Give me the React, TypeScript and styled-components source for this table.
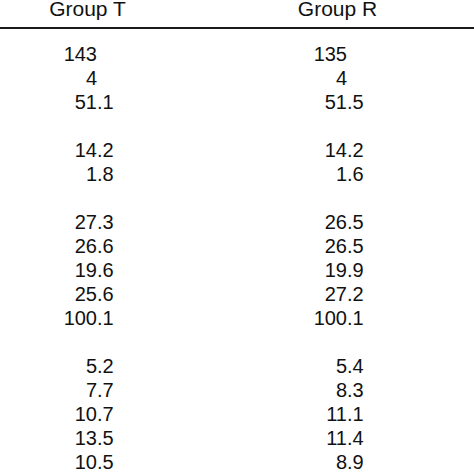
import React from "react";
import styled, { createGlobalStyle } from "styled-components";

const Global = createGlobalStyle`
  html, body { margin: 0; padding: 0; background: #ffffff; }
  body { font-family: "Liberation Sans", Arial, Helvetica, sans-serif; color: #111111; }
`;

const Page = styled.div`
  width: 474px;
  height: 474px;
  overflow: hidden;
  background: #ffffff;
`;

const HeaderRow = styled.div`
  display: grid;
  grid-template-columns: 100px 100px;
  column-gap: 150px;
  padding-left: 37.5px;
  padding-bottom: 9px;
  border-bottom: 2px solid #1a1a1a;
`;

const HeaderCell = styled.div`
  font-size: 21px;
  line-height: 18px;
  height: 18px;
  text-align: center;
  white-space: nowrap;
`;

const Body = styled.div`
  margin-top: 13px;
`;

const Row = styled.div`
  display: grid;
  grid-template-columns: 100px 100px;
  column-gap: 150px;
  padding-left: 37px;
  height: 24px;
  font-size: 20px;
  line-height: 24px;
`;

const NumCell = styled.div`
  display: grid;
  grid-template-columns: 60px 40px;
`;

const IntPart = styled.span`
  text-align: right;
`;

const FracPart = styled.span`
  text-align: left;
`;

type RowData = [string, string] | null;

const rows: RowData[] = [
  ["143", "135"],
  ["4", "4"],
  ["51.1", "51.5"],
  null,
  ["14.2", "14.2"],
  ["1.8", "1.6"],
  null,
  ["27.3", "26.5"],
  ["26.6", "26.5"],
  ["19.6", "19.9"],
  ["25.6", "27.2"],
  ["100.1", "100.1"],
  null,
  ["5.2", "5.4"],
  ["7.7", "8.3"],
  ["10.7", "11.1"],
  ["13.5", "11.4"],
  ["10.5", "8.9"],
];

const Num: React.FC<{ value: string }> = ({ value }) => {
  const i = value.indexOf(".");
  const intPart = i >= 0 ? value.slice(0, i) : value;
  const frac = i >= 0 ? value.slice(i) : "";
  return (
    <NumCell>
      <IntPart>{intPart}</IntPart>
      <FracPart>{frac}</FracPart>
    </NumCell>
  );
};

export default function App() {
  return (
    <Page>
      <Global />
      <HeaderRow>
        <HeaderCell>Group T</HeaderCell>
        <HeaderCell>Group R</HeaderCell>
      </HeaderRow>
      <Body>
        {rows.map((r, idx) => (
          <Row key={idx}>
            {r ? (
              <>
                <Num value={r[0]} />
                <Num value={r[1]} />
              </>
            ) : null}
          </Row>
        ))}
      </Body>
    </Page>
  );
}
